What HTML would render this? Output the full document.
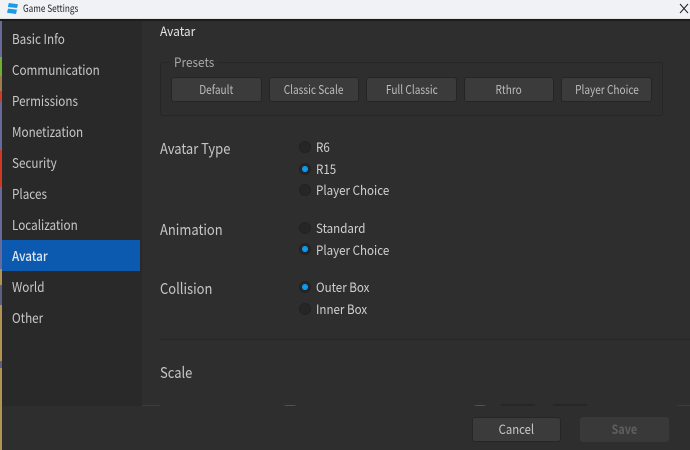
<!DOCTYPE html>
<html><head><meta charset="utf-8"><style>
html,body{margin:0;padding:0;background:#2e2e2e}
#r{position:relative;width:690px;height:450px;overflow:hidden;background:#2e2e2e;font-family:"Noto Sans CJK SC","Liberation Sans",sans-serif;color:#cfcfcf}
#r div{position:absolute;box-sizing:border-box}
.t{white-space:nowrap;line-height:20px;height:20px;transform-origin:0 50%}
.nav{left:12px;font-size:13.5px;color:#c8c8c8;transform:scaleX(.866)}
.lab{left:160px;font-size:15px;color:#c6c6c6;transform:scaleX(.864)}
.btn{top:77px;height:25px;background:#3b3b3b;border:1px solid #252525;border-radius:3px;text-align:center;font-size:12px;line-height:23px;color:#bdbdbd}
.btn span,.bb span{display:inline-block;transform:scaleX(.84);white-space:nowrap}
.rad{left:299px;width:12px;height:12px;border-radius:50%;background:#262626;border:1px solid #222}
.rad.on:after{content:"";position:absolute;left:2px;top:2px;width:6px;height:6px;border-radius:50%;background:#0a9cf5}
.opt{left:316px;font-size:13px;color:#d0d0d0;transform:scaleX(.89)}
</style></head><body><div id="r">
<div style="left:0;top:0;width:690px;height:19px;background:#f1f2f6"></div>
<div style="left:0;top:18px;width:690px;height:1px;background:#e2e2e2"></div>
<div style="left:0;top:19px;width:690px;height:2px;background:#1c1c1c"></div>
<svg style="position:absolute;left:7px;top:3px" width="11" height="11" viewBox="0 0 11 11"><path d="M1.8 0L11 1.2L10 5L0.8 4Z" fill="#1a9be8"/><path d="M1 5.6L10 6.6L9 11L0 9.8Z" fill="#1a9be8"/></svg>
<div class="t" style="left:23px;top:-2px;font-size:10px;color:#222;transform:scaleX(.82)">Game Settings</div>
<svg style="position:absolute;left:679px;top:3px" width="11" height="11" viewBox="0 0 11 11"><path d="M1 1L9 10M9 1L1 10" stroke="#222" stroke-width="1" fill="none"/></svg>

<div style="left:0;top:21px;width:2px;height:429px;background:#6a6a9a"></div>
<div style="left:0;top:57px;width:2px;height:19px;background:#6fb030"></div>
<div style="left:0;top:76px;width:2px;height:15px;background:#a07a50"></div>
<div style="left:0;top:91px;width:2px;height:11px;background:#c8402a"></div>
<div style="left:0;top:150px;width:2px;height:37px;background:#d03a25"></div>
<div style="left:0;top:269px;width:2px;height:181px;background:#b09450"></div>
<div style="left:0;top:285px;width:2px;height:20px;background:#5f5f85"></div>
<div style="left:0;top:361px;width:2px;height:7px;background:#5f5f85"></div>

<div style="left:2px;top:21px;width:140px;height:385px;background:#292929"></div>
<div style="left:2px;top:240px;width:138px;height:31px;background:#0b5ab0"></div>
<div class="t nav" style="top:28px">Basic Info</div>
<div class="t nav" style="top:59px">Communication</div>
<div class="t nav" style="top:90px">Permissions</div>
<div class="t nav" style="top:121px">Monetization</div>
<div class="t nav" style="top:152px">Security</div>
<div class="t nav" style="top:183px">Places</div>
<div class="t nav" style="top:214px">Localization</div>
<div class="t nav" style="top:245px;color:#dfe6f0;font-weight:500">Avatar</div>
<div class="t nav" style="top:276px">World</div>
<div class="t nav" style="top:307px">Other</div>

<div class="t" style="left:160px;top:21px;font-size:13px;color:#e4e4e4;transform:scaleX(.92)">Avatar</div>
<div style="left:160px;top:62px;width:503px;height:54px;border:1px solid #262626;border-radius:3px"></div>
<div style="left:170px;top:58px;width:48px;height:8px;background:#2e2e2e"></div>
<div class="t" style="left:174px;top:52px;font-size:13px;color:#a8a8a8;transform:scaleX(.91)">Presets</div>
<div class="btn" style="left:171px;width:91px"><span>Default</span></div>
<div class="btn" style="left:269px;width:90px"><span>Classic Scale</span></div>
<div class="btn" style="left:366px;width:91px"><span>Full Classic</span></div>
<div class="btn" style="left:464px;width:90px"><span>Rthro</span></div>
<div class="btn" style="left:561px;width:91px"><span>Player Choice</span></div>

<div class="t lab" style="top:139px">Avatar Type</div>
<div class="t lab" style="top:220px">Animation</div>
<div class="t lab" style="top:279px">Collision</div>
<div class="rad" style="top:141px"></div><div class="t opt" style="top:137px">R6</div>
<div class="rad on" style="top:163px"></div><div class="t opt" style="top:159px">R15</div>
<div class="rad" style="top:184px"></div><div class="t opt" style="top:180px">Player Choice</div>
<div class="rad" style="top:222px"></div><div class="t opt" style="top:218px">Standard</div>
<div class="rad on" style="top:243px"></div><div class="t opt" style="top:240px">Player Choice</div>
<div class="rad on" style="top:281px"></div><div class="t opt" style="top:277px">Outer Box</div>
<div class="rad" style="top:303px"></div><div class="t opt" style="top:299px">Inner Box</div>

<div style="left:160px;top:339px;width:530px;height:1px;background:#262626"></div>
<div class="t lab" style="top:363px">Scale</div>

<div style="left:142px;top:405px;width:18px;height:1px;background:#3c3c3c"></div>
<div style="left:284px;top:405px;width:12px;height:1px;background:#555;border-radius:50%"></div>
<div style="left:474px;top:405px;width:12px;height:1px;background:#555;border-radius:50%"></div>
<div style="left:501px;top:404px;width:34px;height:2px;background:#262626"></div>
<div style="left:553px;top:404px;width:34px;height:2px;background:#262626"></div>
<div style="left:677px;top:405px;width:13px;height:1px;background:#3c3c3c"></div>

<div class="bb" style="left:472px;top:417px;width:89px;height:25px;background:#3b3b3b;border:1px solid #262626;border-radius:3px;text-align:center;font-size:13px;line-height:21px;color:#c8c8c8"><span style="transform:scaleX(.87)">Cancel</span></div>
<div class="bb" style="left:580px;top:417px;width:89px;height:25px;background:#393939;border-radius:3px;text-align:center;font-size:13px;line-height:23px;font-weight:700;color:#5f5f5f"><span>Save</span></div>
</div></body></html>
